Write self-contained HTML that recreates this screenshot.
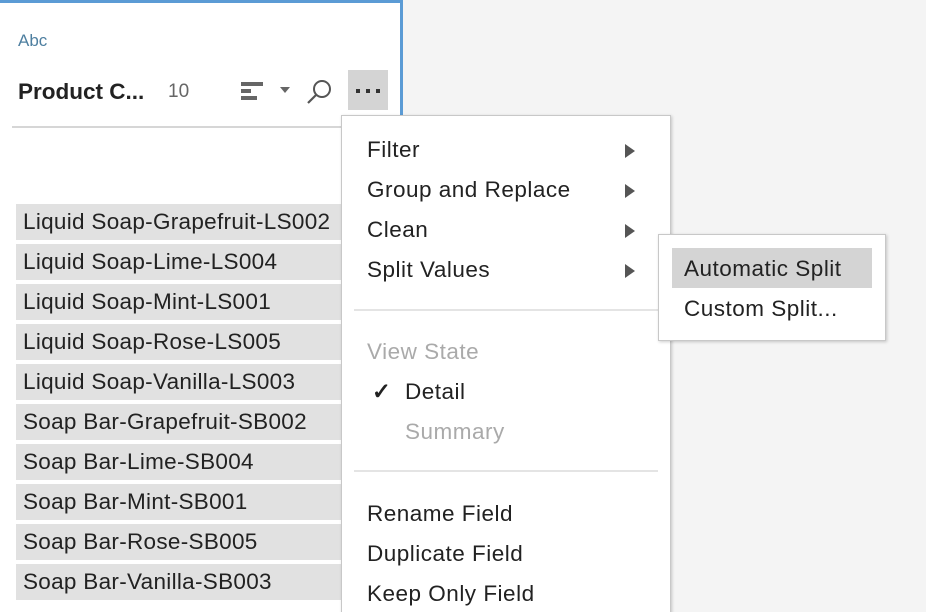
<!DOCTYPE html>
<html><head><style>
html,body{margin:0;width:926px;height:612px;overflow:hidden}
body{background:#f4f4f4;font-family:"Liberation Sans",sans-serif;position:relative;color:#222}
.a{position:absolute;white-space:nowrap}
.panel{position:absolute;left:0;top:0;width:403px;height:612px;background:#fff;border-top:3px solid #5b9bd5;border-right:3px solid #5b9bd5;box-sizing:border-box}
.row{position:absolute;left:16px;width:380px;height:36px;background:#e1e1e1;font-size:22.5px;letter-spacing:0.3px;line-height:36px;padding-left:7px;box-sizing:border-box;color:#222;white-space:nowrap;overflow:hidden}
.menu{position:absolute;left:341px;top:115px;width:330px;height:500px;background:#fff;border:1px solid #c8c8c8;box-shadow:1px 1px 3px rgba(0,0,0,.2);box-sizing:border-box}
.mi{position:absolute;left:25px;font-size:22.5px;letter-spacing:0.5px;line-height:30px;color:#222;white-space:nowrap}
.arr{position:absolute;left:283px;width:0;height:0;border-left:10px solid #555;border-top:7px solid transparent;border-bottom:7px solid transparent}
.sep{position:absolute;left:12px;width:304px;height:2px;background:#e4e4e4}
.sub{position:absolute;left:658px;top:234px;width:228px;height:107px;background:#fff;border:1px solid #c8c8c8;box-shadow:1px 1px 3px rgba(0,0,0,.2);box-sizing:border-box}
</style></head><body>
<div class="panel"></div>
<div class="a" style="left:18px;top:31px;font-size:17px;color:#4e7fa0">Abc</div>
<div class="a" style="left:18px;top:79px;font-size:22.5px;font-weight:bold;color:#222">Product C...</div>
<div class="a" style="left:168px;top:81px;font-size:19px;color:#666">10</div>
<div class="a" style="left:241px;top:82px;width:22px;height:4px;background:#666"></div>
<div class="a" style="left:241px;top:89px;width:10px;height:4px;background:#666"></div>
<div class="a" style="left:241px;top:96px;width:16px;height:4px;background:#666"></div>
<div class="a" style="left:280px;top:87px;border-left:5px solid transparent;border-right:5px solid transparent;border-top:6px solid #666"></div>
<svg class="a" style="left:306px;top:78px" width="28" height="28"><circle cx="16" cy="11" r="8" fill="none" stroke="#555" stroke-width="2"/><line x1="10" y1="17" x2="2" y2="25" stroke="#555" stroke-width="2.2"/></svg>
<div class="a" style="left:348px;top:70px;width:40px;height:40px;background:#d4d4d4"></div>
<div class="a" style="left:356px;top:89px;width:4px;height:4px;background:#333"></div>
<div class="a" style="left:366px;top:89px;width:4px;height:4px;background:#333"></div>
<div class="a" style="left:376px;top:89px;width:4px;height:4px;background:#333"></div>
<div class="a" style="left:12px;top:126px;width:388px;height:2px;background:#d6d6d6"></div>

<div class="row" style="top:204px">Liquid Soap-Grapefruit-LS002</div>
<div class="row" style="top:244px">Liquid Soap-Lime-LS004</div>
<div class="row" style="top:284px">Liquid Soap-Mint-LS001</div>
<div class="row" style="top:324px">Liquid Soap-Rose-LS005</div>
<div class="row" style="top:364px">Liquid Soap-Vanilla-LS003</div>
<div class="row" style="top:404px">Soap Bar-Grapefruit-SB002</div>
<div class="row" style="top:444px">Soap Bar-Lime-SB004</div>
<div class="row" style="top:484px">Soap Bar-Mint-SB001</div>
<div class="row" style="top:524px">Soap Bar-Rose-SB005</div>
<div class="row" style="top:564px">Soap Bar-Vanilla-SB003</div>

<div class="menu">
<div class="mi" style="top:19px">Filter</div><div class="arr" style="top:28px"></div>
<div class="mi" style="top:59px">Group and Replace</div><div class="arr" style="top:68px"></div>
<div class="mi" style="top:99px">Clean</div><div class="arr" style="top:108px"></div>
<div class="mi" style="top:139px">Split Values</div><div class="arr" style="top:148px"></div>
<div class="sep" style="top:193px"></div>
<div class="mi" style="top:221px;color:#aaa">View State</div>
<div class="mi" style="top:261px;left:30px;font-weight:bold">✓</div>
<div class="mi" style="top:261px;left:63px">Detail</div>
<div class="mi" style="top:301px;left:63px;color:#aaa">Summary</div>
<div class="sep" style="top:354px"></div>
<div class="mi" style="top:383px">Rename Field</div>
<div class="mi" style="top:423px">Duplicate Field</div>
<div class="mi" style="top:463px">Keep Only Field</div>
</div>
<div class="sub">
<div class="a" style="left:13px;top:13px;width:200px;height:40px;background:#d4d4d4"></div>
<div class="mi" style="top:19px">Automatic Split</div>
<div class="mi" style="top:59px">Custom Split...</div>
</div>
</body></html>
